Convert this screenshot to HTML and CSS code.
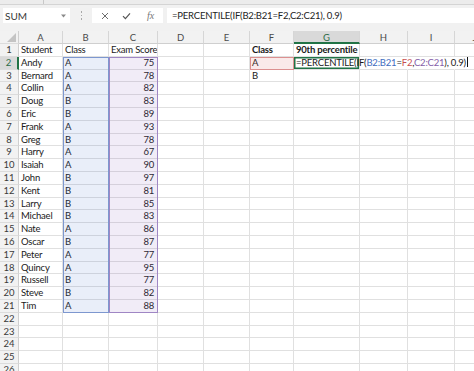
FILE: index.html
```html
<!DOCTYPE html>
<html>
<head>
<meta charset="utf-8">
<link rel="stylesheet" href="styles.css">
</head>
<body>
<div class="app">
  <div class="ribbon-edge"><span class="rdiv"></span></div>
  <div class="fbar">
    <div class="namebox"><span class="nm">SUM</span><svg class="caret" width="5" height="4" viewBox="0 0 5 4"><path d="M0 0.5 L5 0.5 L2.5 3.5 Z" fill="#8a8a8a"/></svg></div>
    <div class="grip"><i></i><i></i><i></i></div>
    <div class="btns">
      <svg width="8" height="8" viewBox="0 0 8 8"><path d="M1 1 L7 7 M7 1 L1 7" stroke="#6d6d6d" stroke-width="1" fill="none"/></svg>
      <svg width="9" height="8" viewBox="0 0 9 8"><path d="M1 4.2 L3.4 6.6 L8 1.4" stroke="#555" stroke-width="1.2" fill="none"/></svg>
      <span class="fx">fx</span>
    </div>
    <div class="finput">=PERCENTILE(IF(B2:B21=F2,C2:C21), 0.9)</div>
  </div>
  <div class="sheet">
    <div class="row head">
      <span class="h corner"><svg width="9" height="9" viewBox="0 0 9 9"><path d="M9 0 L9 9 L0 9 Z" fill="#c4c4c4"/></svg></span>
      <span>A</span><span>B</span><span>C</span><span>D</span><span>E</span><span>F</span><span class="sel">G</span><span>H</span><span>I</span><span>J</span>
    </div>
    <div class="body">
      <div class="row"><span class="h">1</span><span>Student</span><span>Class</span><span>Exam Score</span><span></span><span></span><span class="b">Class</span><span class="b">90th percentile</span><span></span><span></span><span></span></div>
      <div class="row"><span class="h sel">2</span><span>Andy</span><span>A</span><span class="n">75</span><span></span><span></span><span>A</span><span class="active"><span class="ftext">=PERCENTILE(IF(<span class="cb">B2:B21</span>=<span class="cr">F2</span>,<span class="cp">C2:C21</span>), 0.9)<span class="cursor"></span></span></span><span class="nob"></span><span class="nob"></span><span></span></div>
      <div class="row"><span class="h">3</span><span>Bernard</span><span>A</span><span class="n">78</span><span></span><span></span><span>B</span><span></span><span></span><span></span><span></span></div>
      <div class="row"><span class="h">4</span><span>Collin</span><span>A</span><span class="n">82</span><span></span><span></span><span></span><span></span><span></span><span></span><span></span></div>
      <div class="row"><span class="h">5</span><span>Doug</span><span>B</span><span class="n">83</span><span></span><span></span><span></span><span></span><span></span><span></span><span></span></div>
      <div class="row"><span class="h">6</span><span>Eric</span><span>B</span><span class="n">89</span><span></span><span></span><span></span><span></span><span></span><span></span><span></span></div>
      <div class="row"><span class="h">7</span><span>Frank</span><span>A</span><span class="n">93</span><span></span><span></span><span></span><span></span><span></span><span></span><span></span></div>
      <div class="row"><span class="h">8</span><span>Greg</span><span>B</span><span class="n">78</span><span></span><span></span><span></span><span></span><span></span><span></span><span></span></div>
      <div class="row"><span class="h">9</span><span>Harry</span><span>A</span><span class="n">67</span><span></span><span></span><span></span><span></span><span></span><span></span><span></span></div>
      <div class="row"><span class="h">10</span><span>Isaiah</span><span>A</span><span class="n">90</span><span></span><span></span><span></span><span></span><span></span><span></span><span></span></div>
      <div class="row"><span class="h">11</span><span>John</span><span>B</span><span class="n">97</span><span></span><span></span><span></span><span></span><span></span><span></span><span></span></div>
      <div class="row"><span class="h">12</span><span>Kent</span><span>B</span><span class="n">81</span><span></span><span></span><span></span><span></span><span></span><span></span><span></span></div>
      <div class="row"><span class="h">13</span><span>Larry</span><span>B</span><span class="n">85</span><span></span><span></span><span></span><span></span><span></span><span></span><span></span></div>
      <div class="row"><span class="h">14</span><span>Michael</span><span>B</span><span class="n">83</span><span></span><span></span><span></span><span></span><span></span><span></span><span></span></div>
      <div class="row"><span class="h">15</span><span>Nate</span><span>A</span><span class="n">86</span><span></span><span></span><span></span><span></span><span></span><span></span><span></span></div>
      <div class="row"><span class="h">16</span><span>Oscar</span><span>B</span><span class="n">87</span><span></span><span></span><span></span><span></span><span></span><span></span><span></span></div>
      <div class="row"><span class="h">17</span><span>Peter</span><span>A</span><span class="n">77</span><span></span><span></span><span></span><span></span><span></span><span></span><span></span></div>
      <div class="row"><span class="h">18</span><span>Quincy</span><span>A</span><span class="n">95</span><span></span><span></span><span></span><span></span><span></span><span></span><span></span></div>
      <div class="row"><span class="h">19</span><span>Russell</span><span>B</span><span class="n">77</span><span></span><span></span><span></span><span></span><span></span><span></span><span></span></div>
      <div class="row"><span class="h">20</span><span>Steve</span><span>B</span><span class="n">82</span><span></span><span></span><span></span><span></span><span></span><span></span><span></span></div>
      <div class="row"><span class="h">21</span><span>Tim</span><span>A</span><span class="n">88</span><span></span><span></span><span></span><span></span><span></span><span></span><span></span></div>
      <div class="row"><span class="h">22</span><span></span><span></span><span></span><span></span><span></span><span></span><span></span><span></span><span></span><span></span></div>
      <div class="row"><span class="h">23</span><span></span><span></span><span></span><span></span><span></span><span></span><span></span><span></span><span></span><span></span></div>
      <div class="row"><span class="h">24</span><span></span><span></span><span></span><span></span><span></span><span></span><span></span><span></span><span></span><span></span></div>
      <div class="row"><span class="h">25</span><span></span><span></span><span></span><span></span><span></span><span></span><span></span><span></span><span></span><span></span></div>
      <div class="row"><span class="h">26</span><span></span><span></span><span></span><span></span><span></span><span></span><span></span><span></span><span></span><span></span></div>
      <div class="hl hl-b"></div>
      <div class="hl hl-c"></div>
      <div class="hl hl-f"></div>
    </div>
  </div>
</div>
</body>
</html>
```

FILE: styles.css
```css
* { box-sizing: border-box; }
html, body { margin: 0; padding: 0; }
body {
  width: 474px;
  height: 371px;
  overflow: hidden;
  background: #fff;
  font-family: "Lato", "Liberation Sans", sans-serif;
  font-size: 9.5px;
  letter-spacing: -0.2px;
  color: #1a1a1a;
}
.app { width: 474px; height: 371px; overflow: hidden; }

.ribbon-edge {
  height: 5px;
  background: #ececec;
  border-bottom: 1px solid #d4d4d4;
  position: relative;
}
.rdiv {
  position: absolute;
  left: 43px;
  top: 0;
  width: 1px;
  height: 4px;
  background: #c8c8c8;
}

.fbar {
  height: 26px;
  background: #f1f1f1;
  display: flex;
  align-items: flex-start;
  padding-top: 3px;
}
.namebox {
  margin-left: 3px;
  width: 67px;
  height: 15px;
  background: #fff;
  display: flex;
  align-items: center;
  justify-content: space-between;
  padding: 0 4px 0 2px;
  color: #3a3a3a;
  font-size: 10px;
  letter-spacing: 0;
}
.grip {
  width: 22px;
  height: 15px;
  display: flex;
  flex-direction: column;
  align-items: center;
  justify-content: center;
  gap: 2px;
}
.grip i {
  display: block;
  width: 1px;
  height: 1.5px;
  background: #a8a8a8;
}
.btns {
  width: 71px;
  height: 15px;
  background: #fff;
  display: flex;
  align-items: center;
  padding-left: 9px;
  gap: 13px;
}
.fx {
  font-family: "Liberation Serif", serif;
  font-style: italic;
  font-size: 10px;
  letter-spacing: 0;
  color: #777;
  margin-left: 3px;
}
.finput {
  margin-left: 4px;
  flex: 1;
  height: 15px;
  background: #fff;
  padding-left: 5px;
  line-height: 15px;
  color: #222;
  white-space: nowrap;
}

.sheet { position: relative; }
.row {
  display: grid;
  grid-template-columns: 19px 44px 46px 49px 46px 46px 44px 66px 48px 47px 40px;
  height: 12.8px;
}
.row > span {
  border-right: 1px solid #e0e0e0;
  border-bottom: 1px solid #e0e0e0;
  padding-left: 2px;
  line-height: 12px;
  white-space: nowrap;
  overflow: hidden;
}
.head { height: 13px; }
.head > span {
  background: #f2f2f2;
  border-right: 1px solid #d6d6d6;
  border-bottom: 1px solid #cfcfcf;
  text-align: center;
  color: #4a4a4a;
  padding-left: 0;
  line-height: 13px;
  letter-spacing: 0;
}
.head > span.sel {
  background: #d9d9d9;
  color: #2d6b47;
  border-bottom: 2px solid #217346;
}
.corner { position: relative; }
.corner svg { position: absolute; right: 2px; bottom: 1px; }

.row > span.h {
  background: #f2f2f2;
  border-right: 1px solid #cfcfcf;
  border-bottom: 1px solid #dcdcdc;
  color: #3a3a3a;
  text-align: center;
  padding-left: 0;
  letter-spacing: 0;
}
.row > span.h.sel {
  background: #d9d9d9;
  color: #2d6b47;
  border-right: 2px solid #217346;
}
.row > span.n { text-align: right; padding-right: 3px; }
.row > span.b { font-weight: 700; }
.row > span.nob { border-right-color: transparent; }

.body { position: relative; }
.row > span.active {
  overflow: visible;
  position: relative;
  z-index: 3;
  background: #fff;
  box-shadow: inset 0 0 0 1.5px #217346;
}
.ftext {
  position: relative;
  z-index: 4;
  color: #1a1a1a;
}
.cb { color: #3f6cc0; }
.cr { color: #c9504f; }
.cp { color: #8460a8; }
.cursor {
  display: inline-block;
  width: 1px;
  height: 10px;
  background: #111;
  vertical-align: -1px;
  margin-left: 1px;
}

.hl { position: absolute; pointer-events: none; z-index: 2; }
.hl-b {
  left: 63px; top: 12.8px; width: 46px; height: 256px;
  background: rgba(74, 118, 204, 0.12);
  border: 1px solid #7d97cf;
}
.hl-c {
  left: 109px; top: 12.8px; width: 49px; height: 256px;
  background: rgba(140, 100, 190, 0.12);
  border: 1px solid #9f86c4;
}
.hl-f {
  left: 250px; top: 12.8px; width: 44px; height: 12.8px;
  background: rgba(220, 90, 90, 0.13);
  border: 1px solid #dc9090;
}
```
